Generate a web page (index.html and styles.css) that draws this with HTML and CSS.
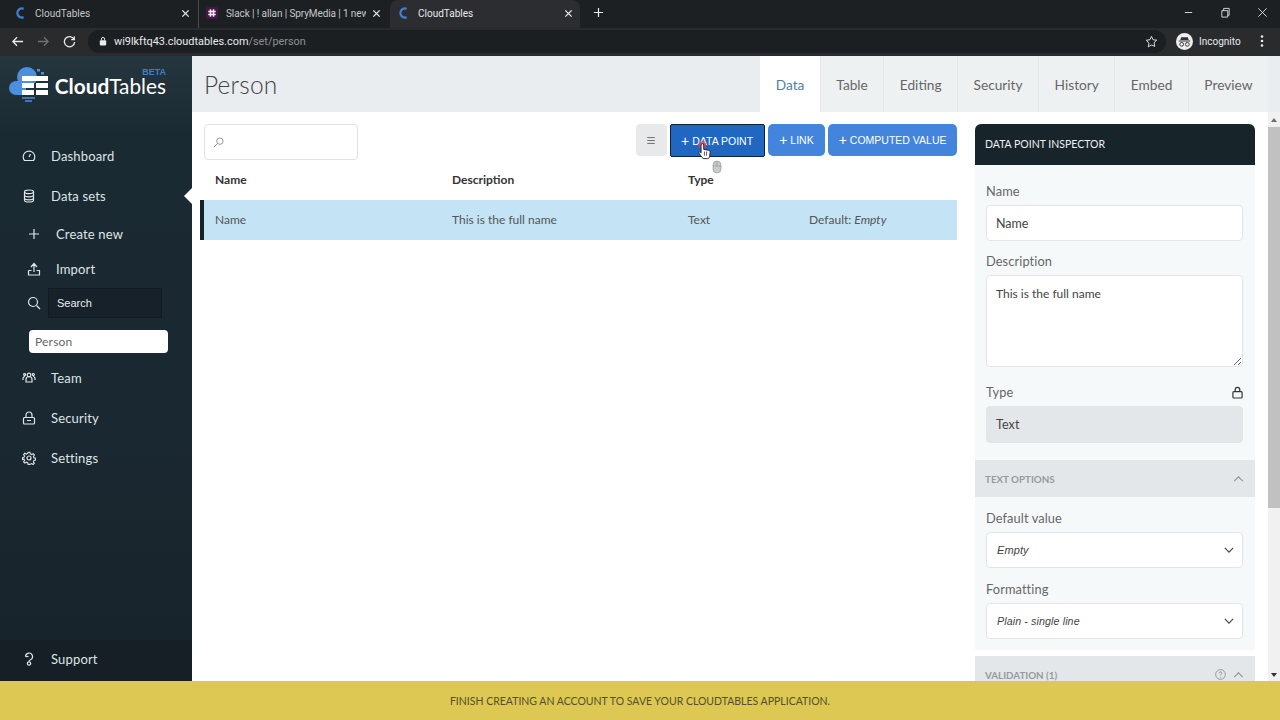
FILE: index.html
```html
<!DOCTYPE html>
<html>

<head>
    <title>CloudTables</title>
    <link rel="stylesheet" href="styles.css">
</head>

<body>
    <div class="tabstrip">
        <div class="tab tab-first">
            <svg class="favicon" viewBox="0 0 16 16"><path d="M11.5 2.5A6 6 0 1 0 11.5 13.5" fill="none" stroke="#3f7fd0" stroke-width="3"/></svg>
            <span class="tab-title">CloudTables</span>
            <svg class="tab-close" viewBox="0 0 10 10"><path d="M1.5 1.5l7 7M8.5 1.5l-7 7"/></svg>
        </div>
        <div class="tab tab-sep">
            <svg class="favicon" viewBox="0 0 16 16"><rect width="16" height="16" rx="3" fill="#4a154b"/><path d="M6 3v10M10 3v10M3 6h10M3 10h10" stroke="#eee" stroke-width="2"/></svg>
            <span class="tab-title">Slack | ! allan | SpryMedia | 1 new</span>
            <svg class="tab-close" viewBox="0 0 10 10"><path d="M1.5 1.5l7 7M8.5 1.5l-7 7"/></svg>
        </div>
        <div class="tab tab-active">
            <svg class="favicon" viewBox="0 0 16 16"><path d="M11.5 2.5A6 6 0 1 0 11.5 13.5" fill="none" stroke="#3f7fd0" stroke-width="3"/></svg>
            <span class="tab-title">CloudTables</span>
            <svg class="tab-close" viewBox="0 0 10 10"><path d="M1.5 1.5l7 7M8.5 1.5l-7 7"/></svg>
        </div>
        <svg class="new-tab" viewBox="0 0 12 12"><path d="M6 1v10M1 6h10"/></svg>
        <div class="window-btns">
            <svg viewBox="0 0 12 12"><path d="M2 6h8"/></svg>
            <svg viewBox="0 0 12 12"><path d="M2 4h6.500v7H2zM4 4V1.500h6V9H8.500"/></svg>
            <svg viewBox="0 0 12 12"><path d="M1.500 1.500l9 9M10.500 1.500l-9 9"/></svg>
        </div>
    </div>
    <div class="toolbar">
        <svg class="nav-icon" viewBox="0 0 14 14"><path d="M13 7H2M6.500 2.500L2 7l4.500 4.500"/></svg>
        <svg class="nav-icon nav-off" viewBox="0 0 14 14"><path d="M1 7h11M7.500 2.500L12 7l-4.500 4.500"/></svg>
        <svg class="nav-icon" viewBox="0 0 14 14"><path d="M11.800 4.500A5.500 5.500 0 1 0 12.500 7.500M12.200 1.500v3.400H8.800"/></svg>
        <div class="omnibox">
            <svg class="lock" viewBox="0 0 10 12"><rect x="1" y="5" width="8" height="6.500" rx="1" fill="#e8eaed"/><path d="M3 5V3.500a2 2 0 0 1 4 0V5" fill="none" stroke="#e8eaed" stroke-width="1.200"/></svg>
            <span class="url">wi9lkftq43.cloudtables.com<span class="url-path">/set/person</span></span>
            <svg class="star" viewBox="0 0 14 14"><path d="M7 1.500l1.700 3.600 3.900.5-2.900 2.700.8 3.900L7 10.800l-3.500 1.900.8-3.900L1.400 5.600l3.900-.5z"/></svg>
        </div>
        <div class="incognito">
            <svg class="incognito-icon" viewBox="0 0 18 18"><circle cx="9" cy="9" r="9" fill="#eee"/><path d="M5.500 4.500h7l1 3h-9zM3 8h12v1H3z" fill="#333"/><circle cx="6" cy="12" r="2" fill="none" stroke="#333"/><circle cx="12" cy="12" r="2" fill="none" stroke="#333"/></svg>
            <span>Incognito</span>
        </div>
        <svg class="kebab" viewBox="0 0 4 14"><circle cx="2" cy="2.500" r="1.300"/><circle cx="2" cy="7" r="1.300"/><circle cx="2" cy="11.500" r="1.300"/></svg>
    </div>

    <div class="app">
        <aside class="sidebar">
            <div class="logo">
                <svg class="logo-mark" viewBox="0 0 42 38">
                    <circle cx="8" cy="22" r="7" fill="#4a8fe0"/>
                    <circle cx="19" cy="11" r="10" fill="#4a8fe0"/>
                    <path d="M8 15h10v14H8z" fill="#4a8fe0"/>
                    <path d="M29 3h3v2.500h-3zM33 6h3v2.500h-3z" fill="#4a8fe0"/>
                    <path d="M14 10h26v5H14zM14 17h12v5H14zM28 17h12v5H28zM14 24h12v5H14zM28 24h12v5H28z" fill="#fff"/>
                    <path d="M14 32h13M17 35h7" stroke="#4a8fe0" stroke-width="1.500"/>
                </svg>
                <div class="logo-text">
                    <span class="beta">BETA</span>
                    <span class="brand"><b>Cloud</b>Tables</span>
                </div>
            </div>
            <nav class="nav">
                <a class="nav-item">
                    <svg viewBox="0 0 14 14"><path d="M2.500 11.500a5.800 5.800 0 1 1 9 0zM7 8l1.500-3"/></svg>Dashboard
                </a>
                <a class="nav-item nav-current">
                    <svg viewBox="0 0 14 14"><ellipse cx="7" cy="2.800" rx="4.500" ry="1.800"/><path d="M2.500 2.800v8.400c0 1 2 1.800 4.500 1.800s4.500-.8 4.500-1.800V2.800M2.500 6c0 1 2 1.800 4.500 1.800S11.500 7 11.500 6M2.500 9c0 1 2 1.800 4.500 1.800s4.500-.8 4.500-1.800"/></svg>Data sets
                </a>
                <a class="sub-item">
                    <svg viewBox="0 0 14 14"><path d="M7 2v10M2 7h10"/></svg>Create new
                </a>
                <a class="sub-item">
                    <svg viewBox="0 0 14 14"><path d="M1.500 8.500v4.500h11V8.500h-3M1.500 8.500h3M7 10V2M4 5l3-3.500L10 5"/></svg>Import
                </a>
                <div class="sub-search">
                    <svg viewBox="0 0 14 14"><circle cx="6" cy="6" r="4.500"/><path d="M9.500 9.500l3.500 3.500"/></svg>
                    <input class="side-search" type="text" value="Search">
                </div>
                <input class="side-current" type="text" value="Person">
                <a class="nav-item nav-after">
                    <svg viewBox="0 0 14 14"><circle cx="7" cy="4" r="1.800"/><path d="M4 11V8.500a3 3 0 0 1 6 0V11zM1 9V7.500a2 2 0 0 1 2-2M13 9V7.500a2 2 0 0 0-2-2"/><circle cx="2.700" cy="3.500" r="1"/><circle cx="11.300" cy="3.500" r="1"/></svg>Team
                </a>
                <a class="nav-item">
                    <svg viewBox="0 0 14 14"><rect x="1.500" y="6.500" width="11" height="6.500" rx="1"/><path d="M4 6.500V4a3 3 0 0 1 6 0v2.500M5 9.500h4"/></svg>Security
                </a>
                <a class="nav-item">
                    <svg viewBox="0 0 14 14"><circle cx="7" cy="7" r="2"/><path d="M6 1h2l.4 1.800 1.500.7 1.600-1 1.300 1.500-1 1.500.5 1.500 1.700.5v2l-1.700.4-.6 1.500 1 1.500-1.400 1.300-1.500-1-1.500.6L8 14H6l-.4-1.700-1.500-.6-1.500 1-1.400-1.300 1-1.500-.6-1.500L0 8.900v-2l1.600-.4.600-1.500-1-1.500L2.500 2l1.600 1 1.500-.7z" transform="translate(.5 .3) scale(.93)"/></svg>Settings
                </a>
            </nav>
            <a class="nav-item support">
                <svg viewBox="0 0 14 14"><path d="M3.500 4.500a3.500 3.500 0 1 1 5 3.200c-.9.400-1.500.8-1.500 1.800"/><path d="M3.500 4.500h3"/><circle cx="7" cy="11.500" r="1.700"/></svg>Support
            </a>
        </aside>

        <main class="main">
            <header class="page-head">
                <h1 class="page-title">Person</h1>
                <div class="page-tabs">
                    <a class="page-tab page-tab-on">Data</a>
                    <a class="page-tab">Table</a>
                    <a class="page-tab">Editing</a>
                    <a class="page-tab">Security</a>
                    <a class="page-tab">History</a>
                    <a class="page-tab">Embed</a>
                    <a class="page-tab">Preview</a>
                </div>
            </header>

            <div class="page-body">
                <section class="data-col">
                    <div class="actions">
                        <div class="table-search">
                            <svg viewBox="0 0 12 12"><circle cx="7.500" cy="4.500" r="3.500"/><path d="M5 7l-4 4"/></svg>
                        </div>
                        <div class="action-btns">
                            <button class="btn-menu"><svg viewBox="0 0 12 10"><path d="M1.500 1.500h9M1.500 5h9M1.500 8.500h9"/></svg></button>
                            <button class="btn btn-pressed"><span class="plus">+</span>DATA POINT</button>
                            <button class="btn btn-link"><span class="plus">+</span>LINK</button>
                            <button class="btn btn-computed"><span class="plus">+</span>COMPUTED VALUE</button>
                        </div>
                    </div>
                    <table class="points">
                        <tr>
                            <th class="col-name">Name</th>
                            <th class="col-desc">Description</th>
                            <th class="col-type">Type</th>
                            <th></th>
                        </tr>
                        <tr class="point-selected">
                            <td>Name</td>
                            <td>This is the full name</td>
                            <td>Text</td>
                            <td>Default: <i>Empty</i></td>
                        </tr>
                    </table>
                    <svg class="cursor" viewBox="0 0 16 20"><circle cx="5" cy="4" r="3.500" fill="#e0405a" opacity=".85"/><path d="M5 2.500c.8 0 1.300.5 1.300 1.300V8l4.500.8c1 .2 1.700.9 1.600 2l-.5 4c-.1 1-.8 2-2 2H6.500c-.7 0-1.200-.3-1.600-.9L1.700 11.500c-.4-.7.5-1.500 1.200-1l.9.800V3.800c0-.8.500-1.300 1.200-1.300z" fill="#fff" stroke="#222" stroke-width=".9"/><path d="M7 10v4M9 10v4" stroke="#222" stroke-width=".7"/></svg>
                    <svg class="mouse-hint" viewBox="0 0 10 14"><rect x="1" y="1" width="8" height="12" rx="4" fill="#c9cbcb" stroke="#9a9c9c" stroke-width=".7"/><path d="M1 6h8M5 1v5" stroke="#8f9191" stroke-width=".6"/></svg>
                </section>

                <section class="inspector">
                    <h2 class="inspector-title">DATA POINT INSPECTOR</h2>
                    <div class="inspector-group">
                        <label class="field-label">Name</label>
                        <input class="field" type="text" value="Name">
                        <label class="field-label">Description</label>
                        <textarea class="field field-area">This is the full name</textarea>
                        <label class="field-label field-label-lock">Type
                            <svg viewBox="0 0 12 14"><rect x="1" y="6" width="10" height="7" rx="1"/><path d="M3.500 6V4a2.500 2.500 0 0 1 5 0v2"/></svg>
                        </label>
                        <div class="field field-locked">Text</div>
                    </div>
                    <div class="section-head">TEXT OPTIONS
                        <svg class="chev" viewBox="0 0 12 7"><path d="M1 6l5-5 5 5"/></svg>
                    </div>
                    <div class="inspector-group group-options">
                        <label class="field-label">Default value</label>
                        <div class="field field-select"><i>Empty</i><svg viewBox="0 0 12 7"><path d="M1 1l5 5 5-5"/></svg></div>
                        <label class="field-label">Formatting</label>
                        <div class="field field-select field-select-small"><i>Plain - single line</i><svg viewBox="0 0 12 7"><path d="M1 1l5 5 5-5"/></svg></div>
                    </div>
                    <div class="section-head">VALIDATION (1)
                        <span class="section-icons">
                            <svg class="help" viewBox="0 0 12 12"><circle cx="6" cy="6" r="5.300"/><path d="M4.500 4.700a1.500 1.500 0 1 1 2.200 1.300c-.5.300-.7.500-.7 1.100M6 8.500v1"/></svg>
                            <svg class="chev" viewBox="0 0 12 7"><path d="M1 6l5-5 5 5"/></svg>
                        </span>
                    </div>
                </section>

                <div class="scrollbar">
                    <span class="arrow-up"></span>
                    <div class="thumb"></div>
                    <span class="arrow-down"></span>
                </div>
            </div>
        </main>
    </div>

    <div class="banner">FINISH CREATING AN ACCOUNT TO SAVE YOUR CLOUDTABLES APPLICATION.</div>
</body>

</html>
```

FILE: styles.css
```css
html, body {
    margin: 0;
    height: 720px;
    overflow: hidden;
}

body {
    display: flex;
    flex-direction: column;
    font-family: Lato, "Open Sans", sans-serif;
    color: #555;
}

svg {
    fill: none;
    stroke: currentColor;
    flex: none;
}

/* browser chrome */
.tabstrip {
    display: flex;
    align-items: stretch;
    height: 28px;
    background-color: #1c2022;
    color: #dfe1e3;
    font-family: Roboto, sans-serif;
    font-size: 10px;
}

.tab {
    display: flex;
    align-items: center;
    box-sizing: border-box;
    padding-bottom: 2px;
    overflow: hidden;
}

.tab-first {
    width: 198px;
    padding-left: 15px;
    padding-right: 2px;
}

.tab-sep {
    width: 190px;
    padding-left: 7px;
    padding-right: 1px;
    border-left: 1px solid #4a4d50;
}

.tab-active {
    width: 190px;
    margin-left: 2px;
    padding-left: 8px;
    padding-right: 1.500px;
    background-color: #2b2d30;
    border-radius: 8px 8px 0 0;
}

.favicon {
    width: 12px;
    height: 12px;
    margin-right: 8px;
    stroke: none;
}

.tab-title {
    flex: 1;
    white-space: nowrap;
    overflow: hidden;
    color: #c6c8ca;
}

.tab-sep .tab-title {
    letter-spacing: -.1px;
}

.tab-active .tab-title {
    color: #e8eaed;
}

.tab-close {
    width: 9px;
    height: 9px;
    margin: 0 6px;
    stroke: #e8eaed;
    stroke-width: 1.4;
}

.new-tab {
    width: 11px;
    height: 11px;
    margin: 7px 0 0 12.500px;
    stroke: #e8eaed;
    stroke-width: 1.3;
}

.window-btns {
    margin-left: auto;
    display: flex;
    align-items: flex-start;
    gap: 26px;
    padding: 7px 12px 0 0;
}

.window-btns svg {
    width: 11px;
    height: 11px;
    stroke: #dfe1e3;
}

.toolbar {
    display: flex;
    align-items: center;
    height: 28px;
    box-sizing: border-box;
    padding: 0 0 2px 11px;
    background-color: #292b2d;
    color: #e8eaed;
    font-family: Roboto, sans-serif;
}

.nav-icon {
    width: 13px;
    height: 13px;
    margin-right: 13px;
    stroke: #e8eaed;
    stroke-width: 1.4;
}

.nav-off {
    stroke: #6f7274;
}

.omnibox {
    display: flex;
    align-items: center;
    width: 1078px;
    height: 23px;
    margin-left: -1px;
    padding: 0 8px 0 11px;
    box-sizing: border-box;
    background-color: #1c1f21;
    border-radius: 12px;
}

.lock {
    width: 8px;
    height: 10px;
    stroke: none;
    margin-right: 7px;
}

.url {
    flex: 1;
    font-size: 10.900px;
    color: #e8eaed;
}

.url-path {
    color: #8d9094;
}

.star {
    width: 13px;
    height: 13px;
    stroke: #e8eaed;
}

.incognito {
    display: flex;
    align-items: center;
    margin-left: 10px;
    font-size: 10px;
    color: #e8eaed;
    gap: 6px;
}

.incognito-icon {
    width: 17px;
    height: 17px;
    stroke: none;
}

.kebab {
    width: 4px;
    height: 14px;
    margin-left: 19px;
    fill: #e8eaed;
    stroke: none;
}

/* app */
.app {
    display: flex;
    height: 625px;
    overflow: hidden;
}

.sidebar {
    display: flex;
    flex-direction: column;
    width: 192px;
    flex: none;
    background: linear-gradient(#25363f, #1a2a32 80px, #1a2831 60%, #17232a);
    color: #dfe4e6;
    font-size: 13px;
    letter-spacing: .17px;
}

.logo {
    display: flex;
    align-items: flex-start;
    height: 80px;
    box-sizing: border-box;
    padding: 10px 0 0 8px;
}

.logo-mark {
    width: 42px;
    height: 38px;
    stroke: none;
}

.logo-mark path:last-child {
    stroke: #4a8fe0;
}

.logo-text {
    display: flex;
    flex-direction: column;
    align-items: flex-end;
    width: 113px;
    margin-left: 3px;
}

.beta {
    margin-top: 1px;
    font-family: "Liberation Sans", sans-serif;
    font-size: 9px;
    font-weight: bold;
    color: #3f7fc8;
    line-height: 11px;
    letter-spacing: 0;
}

.brand {
    color: #fff;
    font-size: 20.800px;
    line-height: 16px;
    letter-spacing: 0;
    white-space: nowrap;
}

.nav {
    display: flex;
    flex-direction: column;
}

.nav-item {
    position: relative;
    display: flex;
    align-items: center;
    height: 40px;
    padding-left: 22px;
}

.nav-item svg {
    width: 14px;
    height: 14px;
    margin-right: 15px;
    stroke-width: 1.2;
}

.nav-current::after {
    content: "";
    position: absolute;
    right: 0;
    top: 12px;
    border: 8px solid transparent;
    border-right-color: #fff;
    border-left-width: 0;
}

.sub-item {
    display: flex;
    align-items: center;
    height: 35px;
    padding-left: 27px;
}

.sub-item svg,
.sub-search svg {
    width: 14px;
    height: 14px;
    margin-right: 15px;
    stroke-width: 1.2;
}

.sub-search {
    display: flex;
    align-items: center;
    padding-left: 27px;
    margin-top: 2px;
}

.sub-search svg {
    margin-right: 7px;
}

.side-search {
    width: 114px;
    height: 30px;
    box-sizing: border-box;
    padding: 0 8px;
    background-color: #16212a;
    border: 1px solid #121b21;
    color: #eee;
    font-family: "Liberation Sans", sans-serif;
    font-size: 11px;
}

.side-current {
    width: 139px;
    height: 23px;
    box-sizing: border-box;
    margin: 12px 0 0 29px;
    padding: 0 6px;
    background-color: #fff;
    border: 0;
    border-radius: 4px;
    color: #666;
    font-family: Lato, sans-serif;
    font-size: 12px;
    letter-spacing: .2px;
}

.nav-after {
    margin-top: 5px;
}

.support {
    margin-top: auto;
    flex: none;
    height: 38px;
    padding-bottom: 3px;
    background-color: #151f25;
}

.main {
    flex: 1;
    display: flex;
    flex-direction: column;
    min-width: 0;
    background-color: #fff;
}

.page-head {
    display: flex;
    justify-content: space-between;
    height: 56px;
    flex: none;
    background-color: #e9edef;
}

.page-title {
    margin: 0;
    padding-left: 12px;
    font-size: 24.500px;
    font-weight: 300;
    line-height: 57px;
    letter-spacing: .2px;
    color: #444;
}

.page-tabs {
    display: flex;
    margin-right: 12px;
}

.page-tab {
    padding: 0 15.500px;
    border-left: 1px solid #e4e8ea;
    background-color: #eef1f2;
    font-size: 13.700px;
    line-height: 57px;
    color: #666;
}

.page-tab-on {
    background-color: #fff;
    color: #4f7fa5;
    border-left: 0;
}

.page-body {
    flex: 1;
    display: flex;
    align-items: flex-start;
    min-height: 0;
    overflow: hidden;
}

.data-col {
    position: relative;
    width: 757px;
    flex: none;
    margin: 12px 0 0 8px;
}

.actions {
    display: flex;
    justify-content: space-between;
    align-items: flex-start;
    padding-left: 4px;
}

.table-search {
    display: flex;
    align-items: center;
    width: 154px;
    height: 36px;
    box-sizing: border-box;
    padding-left: 8px;
    border: 1px solid #dfe1e2;
    border-radius: 4px;
    color: #8a8d8f;
}

.table-search svg {
    width: 11px;
    height: 11px;
}

.action-btns {
    display: flex;
    gap: 3px;
}

.btn-menu {
    display: flex;
    align-items: center;
    justify-content: center;
    width: 31px;
    height: 32px;
    padding: 0;
    border: 0;
    border-radius: 4px;
    background-color: #e7e9eb;
    color: #555;
}

.btn-menu svg {
    width: 10px;
    height: 9px;
}

.btn {
    display: flex;
    align-items: center;
    gap: 3px;
    height: 32px;
    padding: 0 11px;
    border: 0;
    border-radius: 5px;
    background-color: #4385dc;
    color: #fff;
    font-family: "Liberation Sans", sans-serif;
    font-size: 10.500px;
}

.plus {
    font-size: 14px;
    line-height: 14px;
}

.btn-pressed {
    height: 33px;
    padding: 0 10.500px;
    background-color: #2067c2;
    border: 1px solid #10213a;
    border-radius: 2px;
}

.btn-link {
    padding: 0 11.500px;
}

.btn-computed {
    padding: 0 10.500px;
}

.points {
    width: 100%;
    border-collapse: collapse;
    font-size: 12px;
    table-layout: fixed;
}

.points th {
    height: 38px;
    padding: 0 0 2px;
    text-align: left;
    color: #333;
    font-weight: bold;
}

.points td {
    height: 38px;
    padding: 0 0 2px;
    color: #555;
}

.col-name {
    width: 237px;
}

.col-desc {
    width: 234px;
}

.col-type {
    width: 121px;
}

.points th:first-child {
    padding-left: 13px;
}

.points td:first-child {
    padding-left: 11px;
}

.point-selected {
    background-color: #c4e3f5;
}

.point-selected td:first-child {
    border-left: 4px solid #14222a;
}

.cursor {
    position: absolute;
    left: 497px;
    top: 17px;
    width: 17px;
    height: 21px;
    stroke: none;
}

.mouse-hint {
    position: absolute;
    left: 512px;
    top: 36px;
    width: 10px;
    height: 14px;
    stroke: none;
}

.inspector {
    width: 280px;
    flex: none;
    margin: 12px 0 0 18px;
    font-size: 12.800px;
    letter-spacing: .1px;
}

.inspector-title {
    margin: 0;
    height: 41px;
    padding-left: 10px;
    background-color: #17242a;
    border-radius: 6px 6px 0 0;
    color: #eef0f1;
    font-size: 10.500px;
    font-weight: normal;
    line-height: 41px;
    letter-spacing: 0;
}

.inspector-group {
    background-color: #f6f9fa;
    padding: 18px 12px 17px 11px;
}

.field-label {
    display: block;
    line-height: 16px;
    margin-bottom: 6px;
    color: #666;
}

.field {
    display: block;
    width: 257px;
    height: 36px;
    box-sizing: border-box;
    margin: 0 0 12px;
    padding: 0 9px;
    background-color: #fff;
    border: 1px solid #e3e5e6;
    border-radius: 4px;
    color: #444;
    font-family: Lato, sans-serif;
    font-size: 12.500px;
}

.field-area {
    height: 92px;
    padding-top: 10px;
    margin-bottom: 17px;
    font-size: 12px;
}

.field-label-lock {
    display: flex;
    justify-content: space-between;
    align-items: center;
}

.field-label-lock svg {
    width: 11px;
    height: 13px;
    stroke-width: 1.300;
    color: #333;
}

.field-locked {
    height: 37px;
    line-height: 35px;
    background-color: #e4e7e9;
    margin-bottom: 0;
}

.section-head {
    display: flex;
    justify-content: space-between;
    align-items: center;
    height: 37px;
    padding: 0 11px 0 10px;
    background-color: #e4e7e9;
    color: #969a9d;
    font-size: 9.800px;
    font-weight: bold;
    letter-spacing: 0;
}

.section-head .chev {
    width: 11px;
    height: 6px;
    stroke-width: 1.300;
    color: #8f9396;
}

.section-icons {
    display: flex;
    align-items: center;
    gap: 7px;
}

.help {
    width: 11px;
    height: 11px;
    color: #8f9396;
}

.group-options {
    padding-top: 13px;
    padding-bottom: 11px;
    margin-bottom: 6px;
}

.group-options .field {
    margin-bottom: 13px;
}

.group-options .field:last-child {
    margin-bottom: 0;
}

.field-select {
    display: flex;
    align-items: center;
    justify-content: space-between;
    padding: 0 8px 0 10px;
    font-family: "Liberation Sans", sans-serif;
    font-size: 11px;
}

.field-select svg {
    width: 10px;
    height: 6px;
    stroke-width: 1.400;
    color: #444;
}

.field-select-small {
    font-size: 10.700px;
}

.scrollbar {
    display: flex;
    flex-direction: column;
    align-items: center;
    width: 12px;
    flex: none;
    height: 569px;
    margin-left: 13px;
    background-color: #f1f1f1;
}

.arrow-up {
    margin-top: 6px;
    border: 3px solid transparent;
    border-bottom: 4px solid #6c6c6c;
    border-top: 0;
}

.thumb {
    width: 100%;
    height: 381px;
    margin-top: 5px;
    background-color: #c1c1c1;
}

.arrow-down {
    margin-top: auto;
    margin-bottom: 4px;
    border: 3px solid transparent;
    border-top: 4px solid #333;
    border-bottom: 0;
}

.banner {
    flex: 1;
    display: flex;
    align-items: center;
    justify-content: center;
    background-color: #dcc852;
    color: #55502c;
    font-size: 10.500px;
}
```
